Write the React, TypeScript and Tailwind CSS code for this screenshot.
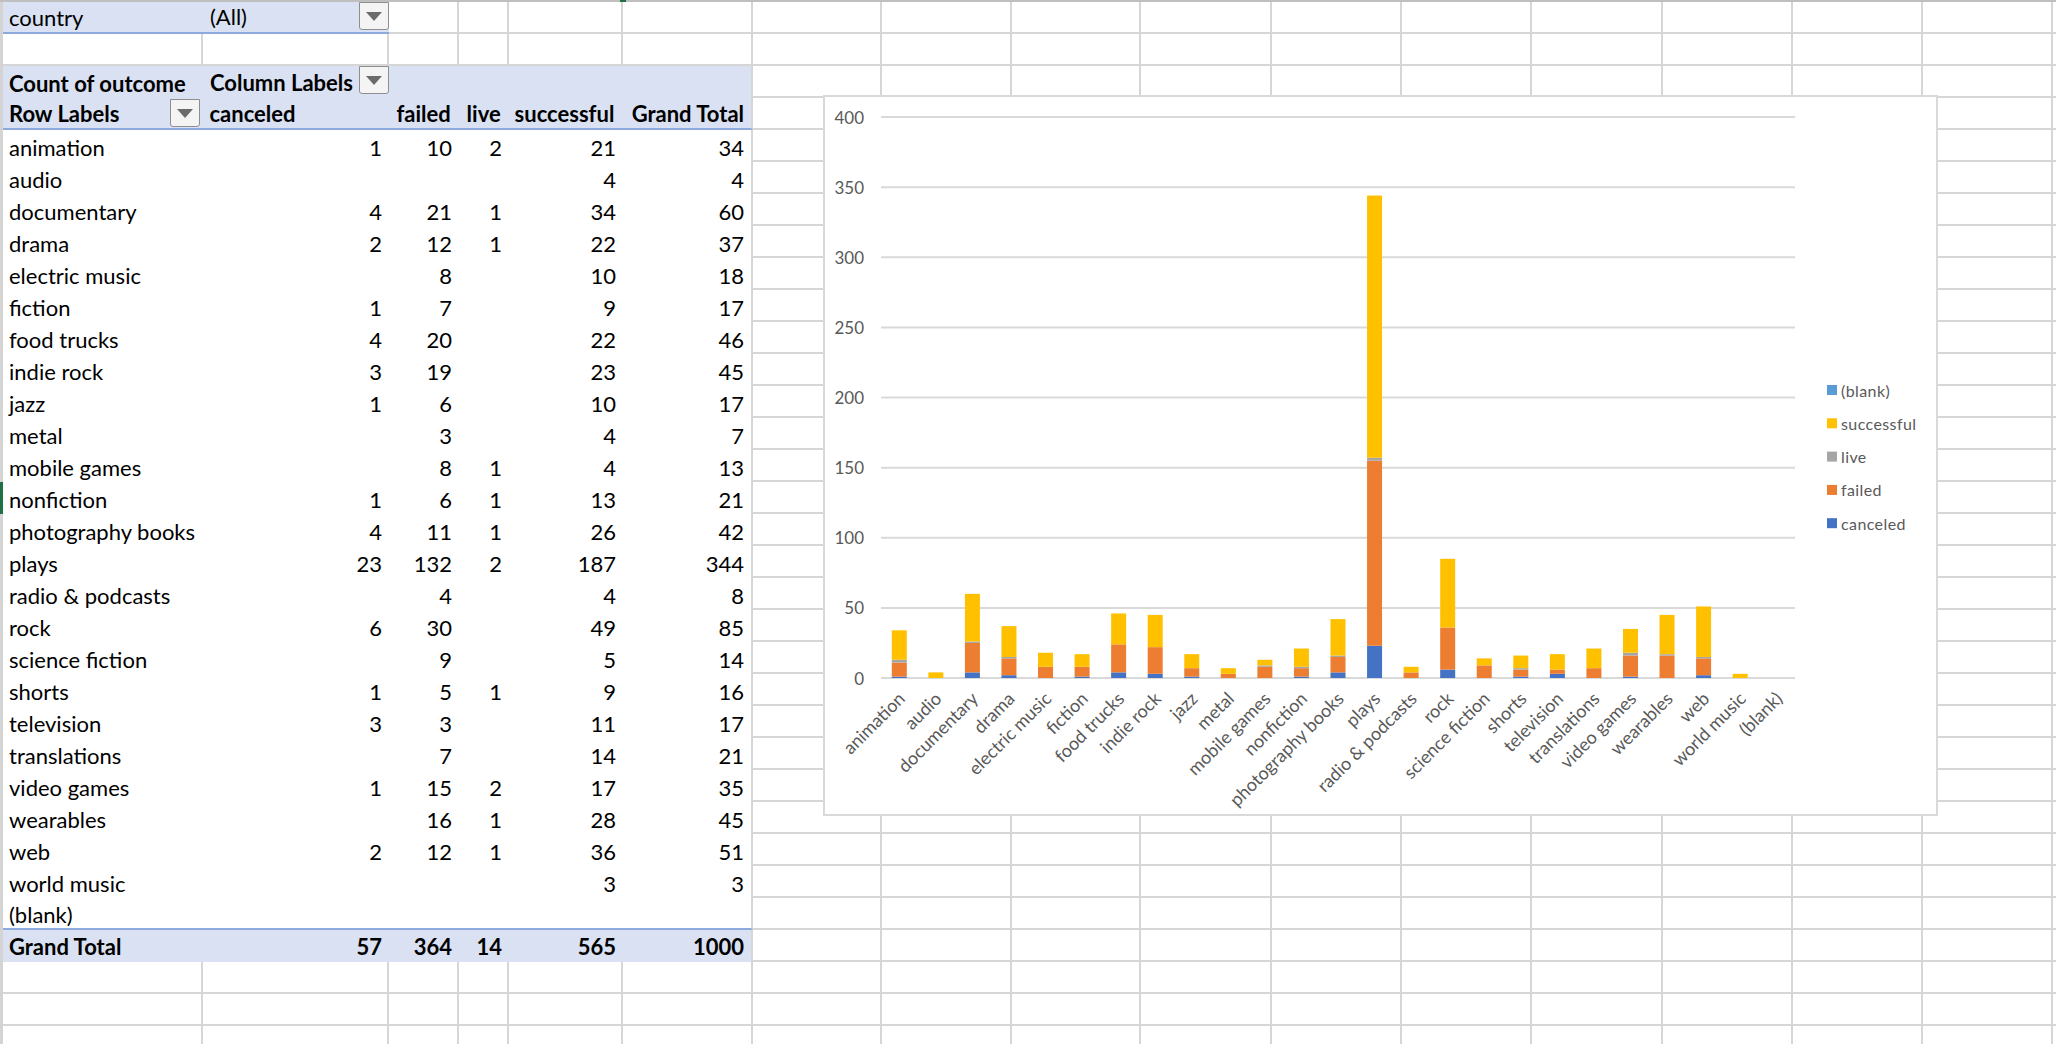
import React from "react";

type Rec = [string, number | null, number | null, number | null, number | null, number | null];

const ROWS: Rec[] = [
  ["animation", 1, 10, 2, 21, 34],
  ["audio", null, null, null, 4, 4],
  ["documentary", 4, 21, 1, 34, 60],
  ["drama", 2, 12, 1, 22, 37],
  ["electric music", null, 8, null, 10, 18],
  ["fiction", 1, 7, null, 9, 17],
  ["food trucks", 4, 20, null, 22, 46],
  ["indie rock", 3, 19, null, 23, 45],
  ["jazz", 1, 6, null, 10, 17],
  ["metal", null, 3, null, 4, 7],
  ["mobile games", null, 8, 1, 4, 13],
  ["nonfiction", 1, 6, 1, 13, 21],
  ["photography books", 4, 11, 1, 26, 42],
  ["plays", 23, 132, 2, 187, 344],
  ["radio & podcasts", null, 4, null, 4, 8],
  ["rock", 6, 30, null, 49, 85],
  ["science fiction", null, 9, null, 5, 14],
  ["shorts", 1, 5, 1, 9, 16],
  ["television", 3, 3, null, 11, 17],
  ["translations", null, 7, null, 14, 21],
  ["video games", 1, 15, 2, 17, 35],
  ["wearables", null, 16, 1, 28, 45],
  ["web", 2, 12, 1, 36, 51],
  ["world music", null, null, null, 3, 3],
  ["(blank)", null, null, null, null, null],
];

// sheet columns A..P (Q fills the rest)
const COL_W = [
  "w-[200px]", "w-[186px]", "w-[70px]", "w-[50px]", "w-[114px]", "w-[130px]",
  "w-[129px]", "w-[130px]", "w-[129px]", "w-[131px]", "w-[130px]", "w-[130px]",
  "w-[131px]", "w-[130px]", "w-[130px]", "w-[130px]",
];

const FONT = { fontFamily: "Lato, 'Liberation Sans', sans-serif" };

function Cell({ w }: { w: string }) {
  return <div className={`${w} h-full shrink-0 border-r-2 border-b-2 border-[#d6d6d6]`} />;
}

function Cells({ from }: { from: number }) {
  return (
    <>
      {COL_W.slice(from).map((w, i) => (
        <Cell key={i} w={w} />
      ))}
      <div className="h-full flex-1 border-b-2 border-[#d6d6d6]" />
    </>
  );
}

function Row({ children, green }: { children: React.ReactNode; green?: boolean }) {
  return (
    <div className="flex h-[32px] shrink-0">
      <div className={green ? "w-[3px] shrink-0 bg-[#1e7145]" : "w-[3px] shrink-0 bg-[#d4d4d4]"} />
      {children}
    </div>
  );
}

function Dropdown() {
  return (
    <div className="flex h-[28px] w-[30px] shrink-0 items-center justify-center rounded-b-[3px] border border-[#8e8e8e] bg-[#f4f4f4]">
      <span className="h-0 w-0 border-l-[8px] border-r-[8px] border-t-[9px] border-l-transparent border-r-transparent border-t-[#6b6b6b]" />
    </div>
  );
}

function Num({ w, v, bold }: { w: string; v: number | null; bold?: boolean }) {
  return (
    <div className={`${w} flex h-full shrink-0 items-center justify-end pr-[7px] ${bold ? "font-bold" : ""}`}>
      {v ?? ""}
    </div>
  );
}

const X0 = 881;
const X1 = 1795;
const Y0 = 678;
const PX = 70.125 / 50;
const CW = (X1 - X0) / 25;
const COLORS = ["#4472C4", "#ED7D31", "#A5A5A5", "#FFC000"];

function Chart() {
  const ticks = [0, 50, 100, 150, 200, 250, 300, 350, 400];
  const legend: [string, string][] = [
    ["(blank)", "#5B9BD5"],
    ["successful", "#FFC000"],
    ["live", "#A5A5A5"],
    ["failed", "#ED7D31"],
    ["canceled", "#4472C4"],
  ];
  return (
    <div className="absolute left-[823px] top-[95px] h-[721px] w-[1115px] border-2 border-[#d9d9d9] bg-white">
      <svg width={1111} height={717} className="block" style={FONT}>
        <g transform="translate(-825,-97)">
          {ticks.map((t) => (
            <g key={t}>
              <line x1={X0} x2={X1} y1={Y0 - t * PX} y2={Y0 - t * PX} stroke="#d9d9d9" strokeWidth={2} />
              <text x={864} y={Y0 - t * PX} textAnchor="end" dominantBaseline="central" fontSize={17} fill="#595959">
                {t}
              </text>
            </g>
          ))}
          {ROWS.map((r, i) => {
            const cx = X0 + CW * (i + 0.5);
            let cum = 0;
            return (
              <g key={r[0]}>
                {[r[1], r[2], r[3], r[4]].map((v, k) => {
                  if (!v) return null;
                  const y = Y0 - (cum + v) * PX;
                  cum += v;
                  return <rect key={k} x={cx - 7.5} y={y} width={15} height={v * PX} fill={COLORS[k]} />;
                })}
                <text
                  x={cx + 2}
                  y={Y0 + 17}
                  textAnchor="end"
                  dominantBaseline="central"
                  fontSize={18}
                  fill="#595959"
                  transform={`rotate(-45 ${cx + 2} ${Y0 + 17})`}
                >
                  {r[0]}
                </text>
              </g>
            );
          })}
          {legend.map(([name, c], i) => (
            <g key={name}>
              <rect x={1827} y={390 + i * 33.3 - 5} width={10} height={10} fill={c} />
              <text x={1841} y={390 + i * 33.3} dominantBaseline="central" fontSize={16} fill="#595959" letterSpacing={0.4}>
                {name}
              </text>
            </g>
          ))}
        </g>
      </svg>
    </div>
  );
}

export default function App() {
  return (
    <div className="relative h-[1044px] w-[2056px] overflow-hidden bg-white text-[22px] text-black" style={FONT}>
      {/* top edge with selected column marker */}
      <div className="flex h-[2px] bg-[#bfbfbf]">
        <div className="w-[620px]" />
        <div className="w-[6px] bg-[#1e7145]" />
      </div>

      {/* row 1: report filter */}
      <Row>
        <div className="flex h-full w-[386px] shrink-0 border-b-2 border-[#8EA9DB] bg-[#D9E1F2]">
          <div className="flex w-[200px] items-center pl-[6px]">country</div>
          <div className="flex flex-1 items-start justify-between pl-[7px]">
            <span className="leading-[30px]">(All)</span>
            <Dropdown />
          </div>
        </div>
        <Cells from={2} />
      </Row>

      {/* row 2 */}
      <Row>
        <Cells from={0} />
      </Row>

      {/* row 3 */}
      <Row>
        <div className="flex h-full w-[750px] shrink-0 border-r-2 border-[#d6d6d6] bg-[#D9E1F2] font-bold">
          <div className="flex w-[200px] items-center pl-[6px] pt-[2px]">Count of outcome</div>
          <div className="flex w-[186px] items-start justify-between pl-[7px]">
            <span className="leading-[34px]">Column Labels</span>
            <Dropdown />
          </div>
        </div>
        <Cells from={6} />
      </Row>

      {/* row 4 */}
      <Row>
        <div className="flex h-full w-[750px] shrink-0 border-r-2 border-b-2 border-r-[#d6d6d6] border-b-[#8EA9DB] bg-[#D9E1F2] font-bold">
          <div className="flex w-[200px] items-center justify-between pl-[6px] pr-[2px]">
            <span>Row Labels</span>
            <Dropdown />
          </div>
          <div className="flex w-[186px] items-center pl-[7px]">canceled</div>
          <div className="flex w-[70px] items-center justify-end pr-[7px]">failed</div>
          <div className="flex w-[50px] items-center justify-end pr-[7px]">live</div>
          <div className="flex w-[114px] items-center justify-end pr-[7px]">successful</div>
          <div className="flex w-[130px] items-center justify-end pr-[7px]">Grand Total</div>
        </div>
        <Cells from={6} />
      </Row>

      {/* data rows */}
      {ROWS.map((r, i) => (
        <Row key={r[0]} green={r[0] === "nonfiction"}>
          <div
            className={
              i === ROWS.length - 1
                ? "flex h-full w-[750px] shrink-0 border-r-2 border-b-2 border-r-[#d6d6d6] border-b-[#8EA9DB]"
                : "flex h-full w-[750px] shrink-0 border-r-2 border-[#d6d6d6]"
            }
          >
            <div className="flex w-[200px] shrink-0 items-center pl-[6px] pt-[3px]">{r[0]}</div>
            <div className="flex flex-1 pt-[3px]">
              <Num w="w-[186px]" v={r[1]} />
              <Num w="w-[70px]" v={r[2]} />
              <Num w="w-[50px]" v={r[3]} />
              <Num w="w-[114px]" v={r[4]} />
              <Num w="w-[128px]" v={r[5]} />
            </div>
          </div>
          <Cells from={6} />
        </Row>
      ))}

      {/* grand total */}
      <Row>
        <div className="flex h-full w-[750px] shrink-0 border-r-2 border-[#d6d6d6] bg-[#D9E1F2] pt-[1px] font-bold">
          <div className="flex w-[200px] shrink-0 items-center pl-[6px]">Grand Total</div>
          <Num w="w-[186px]" v={57} bold />
          <Num w="w-[70px]" v={364} bold />
          <Num w="w-[50px]" v={14} bold />
          <Num w="w-[114px]" v={565} bold />
          <Num w="w-[128px]" v={1000} bold />
        </div>
        <Cells from={6} />
      </Row>

      {[0, 1, 2].map((k) => (
        <Row key={k}>
          <Cells from={0} />
        </Row>
      ))}

      <Chart />
    </div>
  );
}
